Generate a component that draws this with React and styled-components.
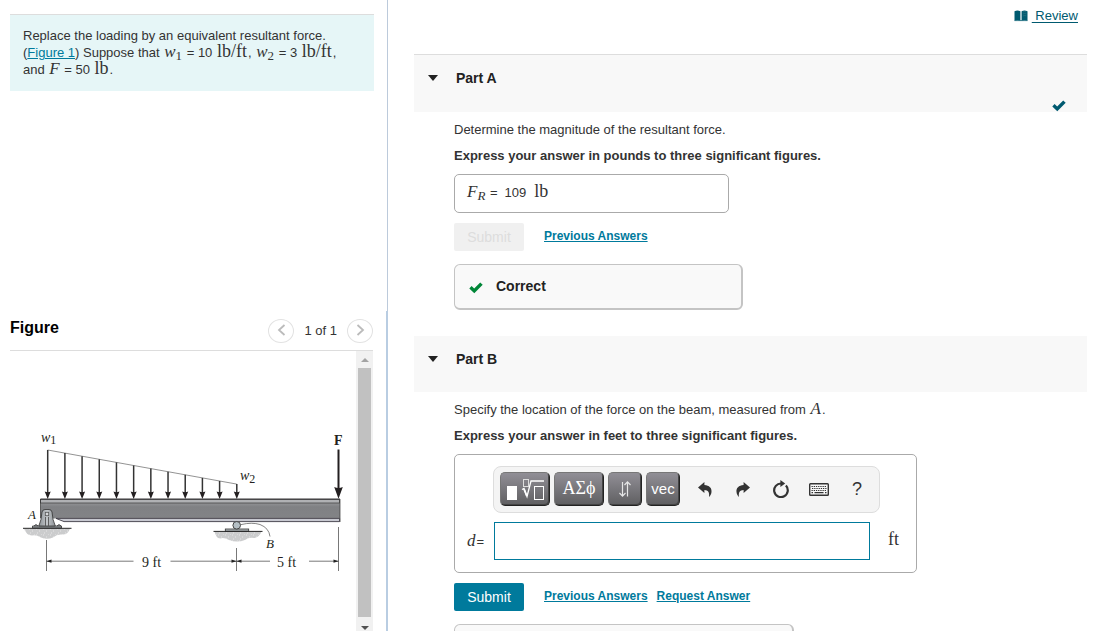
import React from 'react';
import styled, { createGlobalStyle, css } from 'styled-components';

const GlobalStyle = createGlobalStyle`
  *,
  *::before,
  *::after {
    box-sizing: border-box;
  }

  body {
    margin: 0;
    background: #fff;
    color: #333;
    font-family: "Liberation Sans", Arial, sans-serif;
    font-size: 13px;
    line-height: 17px;
  }

  button,
  input {
    font-family: inherit;
  }
`;

const Page = styled.div`
  display: flex;
  height: 100vh;
  overflow: hidden;
`;

const Sidebar = styled.aside`
  display: flex;
  flex: 0 0 388px;
  flex-direction: column;
`;

const PromptPane = styled.section`
  border-right: 1px solid #bccadb;
  flex: 0 0 311px;
  padding: 14px 13px 0 10px;
`;

const Prompt = styled.p`
  background: #e6f6f7;
  border-top: 1px solid #ddd;
  margin: 0;
  padding: 12px 13px 13px;
`;

const Link = styled.a`
  color: #007a9c;
`;

const MathText = styled.span`
  font-family: "Liberation Serif", "Times New Roman", serif;
  font-size: ${props => (props.$italic ? '17px' : '18px')};
  font-style: ${props => (props.$italic ? 'italic' : 'normal')};
  line-height: 0;
  margin: 0 1px;

  sub {
    font-size: 13px;
    font-style: ${props => (props.$italicSub ? 'italic' : 'normal')};
    line-height: 0;
    vertical-align: -3px;
  }
`;

const FigurePane = styled.section`
  border-right: 2px solid #b9cde2;
  display: flex;
  flex: 1;
  flex-direction: column;
  min-height: 0;
  padding: 0 13px 0 10px;
`;

const FigureHeader = styled.header`
  align-items: center;
  border-bottom: 1px solid #ddd;
  display: flex;
  flex: 0 0 40px;
  gap: 10px;
`;

const FigureTitle = styled.h2`
  color: #000;
  flex: 1;
  font-size: 16px;
  line-height: 18px;
  margin: 0;
  padding-bottom: 6px;
`;

const PagerButton = styled.button`
  align-items: center;
  background: #fff;
  border: 1px solid #e2e2e2;
  border-radius: 50%;
  color: #bbb;
  display: flex;
  height: 24px;
  justify-content: center;
  padding: 0 0 2px;
  width: 26px;
`;

const FigureBody = styled.div`
  display: flex;
  flex: 1;
  min-height: 0;
`;

const FigureCanvas = styled.div`
  flex: 1;
  min-width: 0;
  overflow: hidden;
  padding-top: 69px;

  svg {
    display: block;
  }
`;

const Scrollbar = styled.div`
  align-items: center;
  background: #f1f1f1;
  display: flex;
  flex: 0 0 17px;
  flex-direction: column;
  justify-content: space-between;
`;

const ScrollArrow = styled.span`
  border: 4px solid transparent;
  ${props =>
    props.$up
      ? css`
          border-bottom-color: #a3a3a3;
          border-top-width: 0;
          margin: 7px 0 6px;
        `
      : css`
          border-bottom-width: 0;
          border-top-color: #505050;
          margin: 9px 0 1px;
        `};
`;

const ScrollThumb = styled.span`
  background: #c1c1c1;
  flex: 1;
  width: 13px;
`;

const Main = styled.main`
  flex: 1;
  min-width: 0;
  padding: 0 7px 0 26px;
`;

const TopBar = styled.div`
  display: flex;
  height: 54px;
  justify-content: flex-end;
  padding: 7px 9px 0 0;
`;

const ReviewLink = styled.a`
  align-items: center;
  color: #005a70;
  display: flex;
  gap: 4px;
  height: 17px;
  text-decoration: none;

  span {
    text-decoration: underline;
    text-underline-offset: 2px;
    white-space: pre;
  }
`;

const PartHeader = styled.header`
  background: #f8f8f8;
  border-top: ${props => (props.$divided ? '1px solid #ddd' : '0')};
  display: flex;
  justify-content: space-between;
  min-height: ${props => (props.$divided ? '58px' : '56px')};
  padding: 14px 21px 0 14px;
`;

const PartToggle = styled.button`
  align-items: center;
  background: none;
  border: 0;
  color: #222;
  display: flex;
  font-size: 14px;
  font-weight: 700;
  gap: 18px;
  height: 18px;
  line-height: 18px;
  padding: 0;

  &::before {
    border: 5px solid transparent;
    border-bottom-width: 0;
    border-top: 6px solid #222;
    content: "";
  }
`;

const PartStatus = styled.span`
  align-self: flex-end;
  color: #005a70;
  display: flex;
`;

const PartBody = styled.div`
  padding: 9px 0 26px 40px;
`;

const Question = styled.p`
  margin: 0 0 9px;
`;

const Instruction = styled.p`
  font-weight: 700;
  margin: 0 0 10px;
`;

const AnswerBox = styled.div`
  align-items: baseline;
  border: 1px solid #aaa;
  border-radius: 5px;
  display: flex;
  gap: 7px;
  height: 39px;
  line-height: 35px;
  margin-bottom: 10px;
  max-width: 275px;
  padding: 0 11px;
`;

const EntryBox = styled.form`
  border: 1px solid #aaa;
  border-radius: 5px;
  margin-bottom: 10px;
  max-width: 463px;
  padding: 11px 15px 12px 11px;
`;

const Toolbar = styled.div`
  align-items: center;
  background: #f4f4f4;
  border: 1px solid #ddd;
  border-radius: 8px;
  display: flex;
  gap: 4px;
  height: 47px;
  margin: 0 21px 9px 27px;
  padding: 0 3px 1px 6px;
`;

const KeyButton = styled.button`
  align-items: center;
  background: linear-gradient(#918f96, #5f5f61);
  border: 1px solid;
  border-color: #777 #222 #222 #777;
  border-radius: 5px;
  box-shadow: inset -1px -1px 0 #444;
  color: #fff;
  display: flex;
  flex: 0 0 ${props => (props.$wide ? '50px' : '34px')};
  font-family: ${props => (props.$serif ? '"Liberation Serif", serif' : 'inherit')};
  font-size: ${props => (props.$serif ? '18px' : '15px')};
  height: 34px;
  justify-content: center;
  padding: 0 0 1px;
`;

const ToolIcons = styled.div`
  display: flex;
  flex: 1;
  justify-content: space-around;
  padding-left: 2px;
`;

const IconButton = styled.button`
  align-items: center;
  background: none;
  border: 0;
  color: #333;
  display: flex;
  font-size: 18px;
  height: 34px;
  justify-content: center;
  padding: 0;
  width: 34px;
`;

const EntryRow = styled.label`
  align-items: center;
  display: flex;
`;

const EntryName = styled.span`
  flex: 0 0 28px;
`;

const EntryInput = styled.input`
  border: 1px solid #007a9c;
  flex: 1;
  font-size: 16px;
  height: 38px;
  margin-right: 17px;
  min-width: 0;
  outline: 0;
  padding: 0 8px;
`;

const EntryUnit = styled.span`
  flex: 0 0 14px;
  padding-bottom: 2px;
`;

const Actions = styled.div`
  align-items: flex-start;
  display: flex;
  margin-bottom: 13px;
`;

const SubmitButton = styled.button`
  background: #007a9c;
  border: 0;
  border-radius: 2px;
  color: #fff;
  font-size: 14px;
  height: 28px;
  margin-right: 20px;
  padding: 0;
  width: 70px;

  &:disabled {
    background: #f0f0f0;
    color: #ddd;
  }
`;

const ActionLink = styled(Link)`
  font-size: 12px;
  font-weight: 700;
  line-height: 16px;
  margin: 5px 9px 0 0;
`;

const Feedback = styled.div`
  align-items: center;
  background: #f9f9f9;
  border: 1px solid #c4c4c4;
  border-bottom-width: 2px;
  border-radius: 6px;
  border-right-width: 2px;
  color: #222;
  display: flex;
  font-size: 14px;
  font-weight: 700;
  gap: 13px;
  height: 46px;
  max-width: ${props => (props.$wide ? '340px' : '289px')};
  padding: 0 14px;
`;

const CheckIcon = ({ color = 'currentColor' }) => (
  <svg width="14" height="14" viewBox="0 0 14 14" aria-hidden="true">
    <path d="M0.3 8.4 2.6 6.1 5.2 8.5 11.2 2.4 13.7 4.8 5.3 13.3Z" fill={color} />
  </svg>
);

const BookIcon = () => (
  <svg width="14" height="12" viewBox="0 0 14 12" aria-hidden="true">
    <path d="M0.5 1.2Q3.5-.3 6.4 1.2V10.6Q3.5 9.3 0.5 10.6Z" fill="#005a70" />
    <path d="M7.6 1.2Q10.5-.3 13.5 1.2V10.6Q10.5 9.3 7.6 10.6Z" fill="#005a70" />
    <path d="M8.7 2Q10.5 1.2 12.4 1.8M8.7 4Q10.5 3.2 12.4 3.8M8.7 6Q10.5 5.2 12.4 5.8" stroke="#2f7585" strokeWidth="0.6" fill="none" />
    <path d="M.5 10.6H13.5" stroke="#005a70" strokeWidth="0.8" fill="none" />
  </svg>
);

const ChevronIcon = ({ next }) => (
  <svg width="9" height="12" viewBox="0 0 9 12" aria-hidden="true">
    <path
      d={next ? 'M1.5 1 7 6 1.5 11' : 'M7.5 1 2 6 7.5 11'}
      fill="none"
      stroke="currentColor"
      strokeWidth="1.8"
    />
  </svg>
);

const RootIcon = () => (
  <svg width="38" height="24" viewBox="0 0 38 24" aria-hidden="true">
    <rect x="1" y="9" width="10" height="14" fill="#fff" />
    <path d="M16 12.5 18 11.5 21 19.5 25 4H38" fill="none" stroke="#fff" strokeWidth="1.3" />
    <path d="M18 12 20.8 19" stroke="#fff" strokeWidth="1.8" />
    <rect x="17.5" y="2.5" width="5" height="7" fill="none" stroke="#ddd" />
    <rect x="28.5" y="9.5" width="9" height="13" fill="none" stroke="#fff" />
  </svg>
);

const SwapIcon = () => (
  <svg width="14" height="18" viewBox="0 0 14 18" aria-hidden="true">
    <path d="M4.5 2V16M1.5 13 4.5 16.2 7.5 13M9.5 16.5V2M6.5 5 9.5 1.8 12.5 5" fill="none" stroke="#e6e6e6" strokeWidth="1.2" />
  </svg>
);

const CurvedArrowIcon = ({ flipped }) => (
  <svg width="14" height="15" viewBox="0 0 14 15" aria-hidden="true">
    <path
      d="M0 5.4 6.4 0V3.1C11.3 3.4 13.9 6.2 13.5 9.9 13.3 11.8 12.4 13.6 11 15 11.7 10.4 10.2 8 6.4 7.9V11Z"
      fill="currentColor"
      transform={flipped ? 'translate(14 0) scale(-1 1)' : undefined}
    />
  </svg>
);

const ResetIcon = () => (
  <svg width="16" height="18" viewBox="0 0 16 18" aria-hidden="true">
    <path d="M12.9 5.6A6.8 6.8 0 1 1 8.4 3.5" fill="none" stroke="currentColor" strokeWidth="2.2" />
    <path d="M7.4 0 12.2 3.6 7.4 7Z" fill="currentColor" />
  </svg>
);

const KeyboardIcon = () => (
  <svg width="20" height="13" viewBox="0 0 20 13" aria-hidden="true">
    <rect x="0.7" y="0.7" width="18.6" height="11.6" rx="0.8" fill="#f8f8f8" stroke="currentColor" strokeWidth="1.4" />
    <path d="M2.5 3.5H17.5M3 5.5H17.5M2.5 7.5H17.5" stroke="currentColor" strokeWidth="1.1" strokeDasharray="1.3 0.9" />
    <path d="M2.5 9.7H4M5.5 9.7H14.5M16 9.7H17.5" stroke="currentColor" strokeWidth="1.2" />
  </svg>
);

// Twelve evenly spaced arrows under the trapezoidal load.
const loads = Array.from({ length: 12 }, (_, i) => ({
  x: 47.7 + i * 17.19,
  y: 450 + i * 3.1
}));

const LoadArrow = ({ x, y }) => (
  <g>
    <path d={`M${x} ${y}V494`} stroke="#333" strokeWidth="1.5" />
    <path d={`M${x - 3} 491.5Q${x} 492.8 ${x + 3} 491.5L${x} 499Z`} fill="#231f20" />
  </g>
);

const DimensionLine = ({ from, to, heads }) => (
  <g>
    <path d={`M${from} 561.2H${to}`} stroke="#555" strokeWidth="0.8" />
    {heads === 'left' ? (
      <path d={`M${from} 561.2l5-1.6v3.2Z`} fill="#222" />
    ) : (
      <path d={`M${to} 561.2l-5-1.6v3.2Z`} fill="#222" />
    )}
  </g>
);

const BeamDiagram = () => (
  <svg
    width="340"
    height="160"
    viewBox="10 420 340 160"
    fontFamily="Liberation Serif, serif"
    fontSize="14"
    fill="#231f20"
    role="img"
    aria-label="Beam with a distributed load and a point load"
  >
    <defs>
      <linearGradient id="web" x1="0" y1="0" x2="0" y2="1">
        <stop offset="0" stopColor="#77787b" />
        <stop offset="0.2" stopColor="#929396" />
        <stop offset="0.4" stopColor="#808184" />
        <stop offset="1" stopColor="#828386" />
      </linearGradient>
      <linearGradient id="metal">
        <stop offset="0" stopColor="#8c9195" />
        <stop offset="0.5" stopColor="#c3c7ca" />
        <stop offset="1" stopColor="#8c9195" />
      </linearGradient>
      <pattern id="ground" width="7" height="6" patternUnits="userSpaceOnUse">
        <rect width="7" height="6" fill="#cbcccd" />
        <path d="M1 1h1M4 3h1M2 5h1M6 0h1" stroke="#eee" strokeWidth="0.8" />
      </pattern>
    </defs>

    <path d="M47.7 450 236.8 484.1" stroke="#777" strokeWidth="0.8" />
    {loads.map(load => (
      <LoadArrow key={load.x} {...load} />
    ))}
    <path d="M338.5 449.5V489" stroke="#231f20" strokeWidth="2" />
    <path d="M334.2 487Q338.5 489 342.8 487L338.5 498.8Z" />

    <rect x="40.5" y="499" width="299.5" height="19.5" fill="url(#web)" />
    <rect x="40.5" y="499.5" width="299" height="3.5" fill="#b0b1b4" stroke="#444" strokeWidth="0.8" />
    <path d="M40.5 499H340" stroke="#3a383b" strokeWidth="1.2" />
    <path d="M56 518.4H339.6V521.6H64Z" fill="#c7c8d0" stroke="#3e3b45" strokeWidth="0.9" />
    <path d="M340 499V522M40.5 499V518" stroke="#333" strokeWidth="0.7" />

    <path d="M24 528.5H70Q68 535 62 534.5 57 534 53 537.5 47 540 41 537.5 36 534.5 32 535.5 26 535 24 528.5Z" fill="url(#ground)" />
    <path d="M32.5 528V526H61.5V528ZM34 526q2-3 4 0M57 526q2-3 4 0" fill="#a9afb3" stroke="#333" strokeWidth="0.8" />
    <path d="M38.8 526Q41.5 520 42 512 42.6 509.5 45 509.5H49Q51.5 509.5 52 512 52.5 520 55.3 526Z" fill="url(#metal)" stroke="#333" strokeWidth="0.8" />
    <rect x="45.3" y="512.3" width="3.4" height="3.4" fill="#d8dadc" stroke="#555" strokeWidth="0.8" />
    <path d="M45.5 517V526M48.5 517V526" stroke="#555" strokeWidth="0.9" />
    <path d="M23 528.3H71.5" stroke="#222" strokeWidth="1" />

    <path d="M214.5 531.5H261.5Q259 538 254 538 249 537 245 540 237 543 229 540 224 537 220 538.5 216 538 214.5 531.5Z" fill="url(#ground)" />
    <rect x="225.3" y="529" width="23.4" height="2.2" fill="#b5bbbf" stroke="#333" strokeWidth="0.8" />
    <path d="M213.5 531.4H262.5" stroke="#222" strokeWidth="1" />
    <circle cx="236.7" cy="525.3" r="3.8" fill="#b5bfc5" stroke="#444" />
    <path d="M241 524.6Q252 522 260 524.5 269 528 270 536.5" fill="none" stroke="#666" strokeWidth="0.8" />

    <path d="M46.5 540V571M236.5 548V571M338.5 527V571" stroke="#555" strokeWidth="0.8" />
    <DimensionLine from={46.5} to={133.5} heads="left" />
    <DimensionLine from={170.5} to={236.5} heads="right" />
    <DimensionLine from={236.5} to={270} heads="left" />
    <DimensionLine from={309} to={338.5} heads="right" />

    <text x="41" y="442" fontStyle="italic">
      w<tspan dy="2" fontSize="12" fontStyle="normal">1</tspan>
    </text>
    <text x="240" y="480" fontStyle="italic">
      w<tspan dy="3" fontSize="12" fontStyle="normal">2</tspan>
    </text>
    <text x="334" y="445" fontWeight="700">F</text>
    <text x="28" y="519" fontSize="13" fontStyle="italic">A</text>
    <text x="266" y="548" fontSize="13" fontStyle="italic">B</text>
    <text x="142" y="567">9 ft</text>
    <text x="277" y="567">5 ft</text>
  </svg>
);

const App = () => (
  <Page>
    <GlobalStyle />
    <Sidebar>
      <PromptPane>
        <Prompt>
          Replace the loading by an equivalent resultant force.
          <br />(<Link href="#figure">Figure 1</Link>) Suppose that{' '}
          <MathText $italic>w<sub>1</sub></MathText> = 10 <MathText>lb/ft</MathText>,{' '}
          <MathText $italic>w<sub>2</sub></MathText> = 3 <MathText>lb/ft</MathText>,
          <br />and <MathText $italic>F</MathText> = 50 <MathText>lb</MathText>.
        </Prompt>
      </PromptPane>

      <FigurePane id="figure">
        <FigureHeader>
          <FigureTitle>Figure</FigureTitle>
          <PagerButton type="button" aria-label="Previous figure">
            <ChevronIcon />
          </PagerButton>
          <span>1 of 1</span>
          <PagerButton type="button" aria-label="Next figure">
            <ChevronIcon next />
          </PagerButton>
        </FigureHeader>
        <FigureBody>
          <FigureCanvas>
            <BeamDiagram />
          </FigureCanvas>
          <Scrollbar aria-hidden="true">
            <ScrollArrow $up />
            <ScrollThumb />
            <ScrollArrow />
          </Scrollbar>
        </FigureBody>
      </FigurePane>
    </Sidebar>

    <Main>
      <TopBar>
        <ReviewLink href="#review">
          <BookIcon />
          <span> Review</span>
        </ReviewLink>
      </TopBar>

      <section>
        <PartHeader $divided>
          <PartToggle type="button" aria-expanded="true">Part A</PartToggle>
          <PartStatus>
            <CheckIcon />
          </PartStatus>
        </PartHeader>
        <PartBody>
          <Question>Determine the magnitude of the resultant force.</Question>
          <Instruction>Express your answer in pounds to three significant figures.</Instruction>
          <AnswerBox>
            <span>
              <MathText $italic $italicSub>F<sub>R</sub></MathText> =
            </span>
            <span>109</span>
            <MathText>lb</MathText>
          </AnswerBox>
          <Actions>
            <SubmitButton type="button" disabled>Submit</SubmitButton>
            <ActionLink href="#previous-a">Previous Answers</ActionLink>
          </Actions>
          <Feedback>
            <CheckIcon color="#008638" />
            Correct
          </Feedback>
        </PartBody>
      </section>

      <section>
        <PartHeader>
          <PartToggle type="button" aria-expanded="true">Part B</PartToggle>
        </PartHeader>
        <PartBody>
          <Question>
            Specify the location of the force on the beam, measured from{' '}
            <MathText $italic>A</MathText>.
          </Question>
          <Instruction>Express your answer in feet to three significant figures.</Instruction>
          <EntryBox id="entry" onSubmit={event => event.preventDefault()}>
            <Toolbar>
              <KeyButton type="button" $wide aria-label="Templates">
                <RootIcon />
              </KeyButton>
              <KeyButton type="button" $wide $serif>ΑΣϕ</KeyButton>
              <KeyButton type="button" aria-label="Arrows">
                <SwapIcon />
              </KeyButton>
              <KeyButton type="button">vec</KeyButton>
              <ToolIcons>
                <IconButton type="button" aria-label="Undo">
                  <CurvedArrowIcon />
                </IconButton>
                <IconButton type="button" aria-label="Redo">
                  <CurvedArrowIcon flipped />
                </IconButton>
                <IconButton type="button" aria-label="Reset">
                  <ResetIcon />
                </IconButton>
                <IconButton type="button" aria-label="Keyboard shortcuts">
                  <KeyboardIcon />
                </IconButton>
                <IconButton type="button">?</IconButton>
              </ToolIcons>
            </Toolbar>
            <EntryRow>
              <EntryName>
                <MathText $italic>d</MathText>=
              </EntryName>
              <EntryInput type="text" />
              <EntryUnit>
                <MathText>ft</MathText>
              </EntryUnit>
            </EntryRow>
          </EntryBox>
          <Actions>
            <SubmitButton type="submit" form="entry">Submit</SubmitButton>
            <ActionLink href="#previous-b">Previous Answers</ActionLink>
            <ActionLink href="#request">Request Answer</ActionLink>
          </Actions>
          <Feedback $wide />
        </PartBody>
      </section>
    </Main>
  </Page>
);

export default App;
